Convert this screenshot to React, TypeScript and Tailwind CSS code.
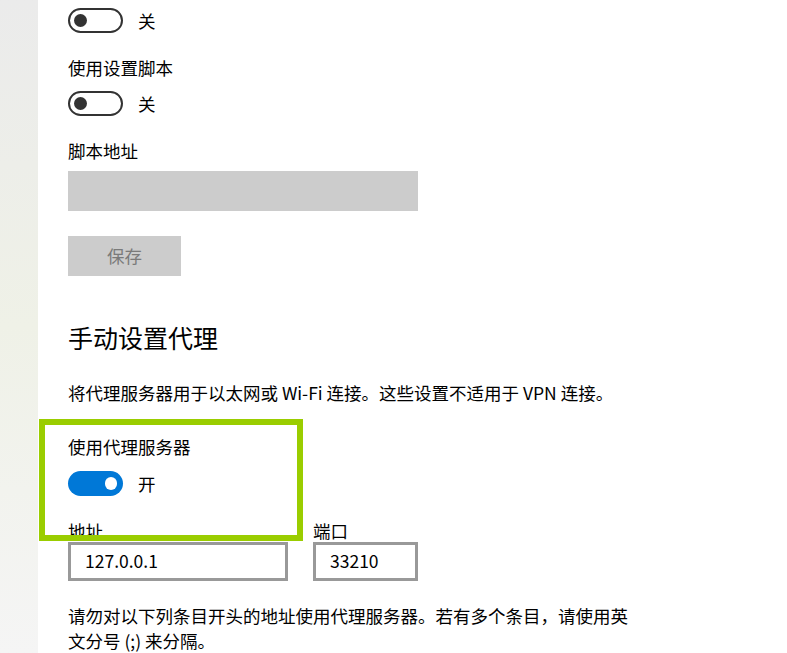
import React from "react";

const font = { fontFamily: '"Noto Sans CJK SC", "Noto Sans", sans-serif' };

function Toggle({ on }: { on: boolean }) {
  if (on) {
    return (
      <div className="flex h-[25px] w-[55px] items-center justify-end rounded-full bg-[#0078d7] pr-[6px]">
        <div className="h-[12.5px] w-[12.5px] rounded-full bg-white" />
      </div>
    );
  }
  return (
    <div className="flex h-[25px] w-[55px] items-center rounded-full border-[2.5px] border-[#333333] pl-[4px]">
      <div className="h-[12.5px] w-[12.5px] rounded-full bg-[#333333]" />
    </div>
  );
}

function ToggleRow({ on, className }: { on: boolean; className: string }) {
  return (
    <div className={"flex items-center gap-[15px] " + className}>
      <Toggle on={on} />
      <span className="text-[17.5px] leading-[24px] text-black">{on ? "开" : "关"}</span>
    </div>
  );
}

export default function App() {
  return (
    <div className="flex h-[653px] w-[787px] overflow-hidden bg-white" style={font}>
      {/* left nav strip */}
      <div className="w-[38px] shrink-0 bg-linear-to-b from-[#ebebeb] via-[#eff1e7] to-[#f5f5f5]" />

      <div className="relative flex flex-1 flex-col pl-[30px] text-[17.5px] text-black">
        <ToggleRow on={false} className="mt-[8px]" />

        <p className="mt-[23px] leading-[24px]">使用设置脚本</p>
        <ToggleRow on={false} className="mt-[11px]" />

        <p className="mt-[23px] leading-[24px]">脚本地址</p>
        <div className="mt-[8px] h-[40px] w-[350px] bg-[#cccccc]" />

        <button className="mt-[25px] flex h-[40px] w-[113px] items-center justify-center bg-[#cccccc] text-[17.5px] text-[#7a7a7a]">
          保存
        </button>

        <h2 className="mt-[44px] text-[25px] leading-[34px]">手动设置代理</h2>

        <p className="mt-[27px] leading-[24px]">
          将代理服务器用于以太网或 Wi-Fi 连接。这些设置不适用于 VPN 连接。
        </p>

        <p className="mt-[30px] leading-[24px]">使用代理服务器</p>
        <ToggleRow on={true} className="mt-[12px]" />

        <div className="mt-[23px] flex gap-[25px]">
          <div className="flex flex-col">
            <span className="leading-[23px]">地址</span>
            <div className="flex h-[39px] w-[220px] items-center border-[3px] border-[#999999] pl-[14px]">
              127.0.0.1
            </div>
          </div>
          <div className="flex flex-col">
            <span className="leading-[23px]">端口</span>
            <div className="flex h-[39px] w-[105px] items-center border-[3px] border-[#999999] pl-[14px]">
              33210
            </div>
          </div>
        </div>

        <p className="mt-[22px] w-[572px] leading-[25px]">
          请勿对以下列条目开头的地址使用代理服务器。若有多个条目，请使用英文分号 (;) 来分隔。
        </p>

        {/* highlight annotation */}
        <div className="pointer-events-none absolute left-[1px] top-[419px] h-[122px] w-[264px] border-[6px] border-[#9acd00]" />
      </div>
    </div>
  );
}
